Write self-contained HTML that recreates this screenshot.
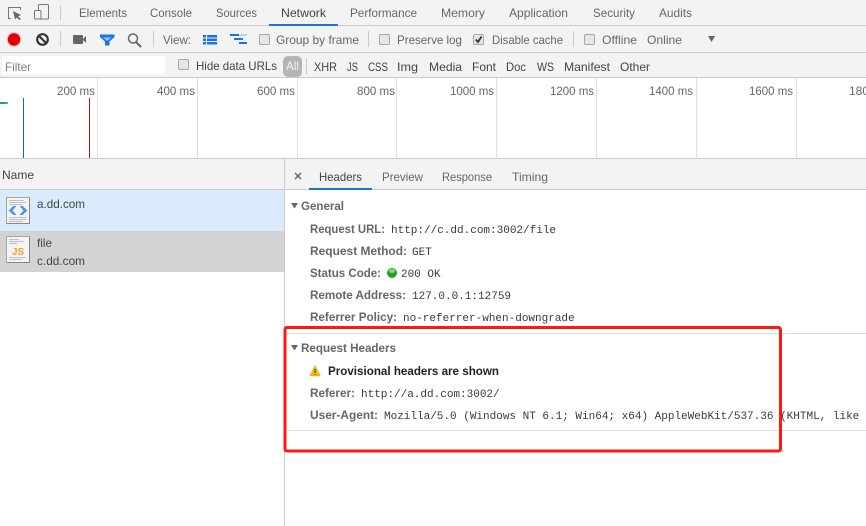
<!DOCTYPE html>
<html>
<head>
<meta charset="utf-8">
<style>
html,body{margin:0;padding:0;background:#fff;width:866px;height:526px;overflow:hidden}
svg{display:block}
text{font-family:"Liberation Sans",sans-serif;font-size:12px;fill:#666}
.d{fill:#444}
.b{font-weight:bold;fill:#666}
.m{font-family:"Liberation Mono",monospace;font-size:11px;fill:#3a3a3a}
</style>
</head>
<body>
<svg width="866" height="526" viewBox="0 0 866 526" xmlns="http://www.w3.org/2000/svg">
<rect width="866" height="526" fill="#fff"/>
<rect width="866" height="77" fill="#f3f3f3"/>
<rect y="25" width="866" height="1" fill="#ccc"/>
<rect y="52" width="866" height="1" fill="#ccc"/>
<rect y="77" width="866" height="1" fill="#ccc"/>

<!-- top tabs -->
<path d="M11 18.500H8.500V7.500H20.500V10" fill="none" stroke="#777" stroke-width="1"/>
<path d="M13 11L21 15L18 16.500L21 19L19.500 20L17 17.500L15 19.500Z" fill="#5f6b76"/>
<rect x="38.500" y="4.500" width="10" height="14.500" fill="none" stroke="#777" rx="1"/>
<rect x="34.500" y="10.500" width="6.500" height="8.500" fill="#f3f3f3" stroke="#777" rx="1"/>
<rect x="60" y="5" width="1" height="15" fill="#ccc"/>
<text x="79" y="17" textLength="48" lengthAdjust="spacingAndGlyphs">Elements</text>
<text x="150" y="17" textLength="42" lengthAdjust="spacingAndGlyphs">Console</text>
<text x="216" y="17" textLength="41" lengthAdjust="spacingAndGlyphs">Sources</text>
<text x="281" y="17" textLength="45" lengthAdjust="spacingAndGlyphs" class="d">Network</text>
<text x="350" y="17" textLength="67" lengthAdjust="spacingAndGlyphs">Performance</text>
<text x="441" y="17" textLength="44" lengthAdjust="spacingAndGlyphs">Memory</text>
<text x="509" y="17" textLength="59" lengthAdjust="spacingAndGlyphs">Application</text>
<text x="593" y="17" textLength="42" lengthAdjust="spacingAndGlyphs">Security</text>
<text x="659" y="17" textLength="33" lengthAdjust="spacingAndGlyphs">Audits</text>
<rect x="269" y="24" width="69" height="2" fill="#1a73e8"/>

<!-- toolbar -->
<circle cx="14" cy="39.500" r="7.500" fill="#e9a0a0" opacity=".5"/>
<circle cx="14" cy="39.500" r="6.200" fill="#e30000"/>
<circle cx="42.500" cy="39.500" r="5.300" fill="none" stroke="#333" stroke-width="2.200"/>
<path d="M38.500 35.500L46.500 43.500" stroke="#333" stroke-width="2.200"/>
<rect x="60" y="31" width="1" height="16" fill="#ccc"/>
<rect x="73" y="35" width="10" height="9" rx="1" fill="#666"/>
<path d="M83 39L86 36V43L83 40Z" fill="#666"/>
<path d="M100 34.500H114.500V37L109.500 41.500V45.500L105 45.500V41.500L100 37Z" fill="#1a73e8"/>
<path d="M103 37.500H111.500L107.200 41Z" fill="#9cc5f5"/>
<circle cx="133" cy="38.500" r="4.500" fill="none" stroke="#666" stroke-width="1.500"/>
<path d="M136 42L141 47" stroke="#666" stroke-width="2"/>
<rect x="153" y="31" width="1" height="16" fill="#ccc"/>
<text x="163" y="44" textLength="28" lengthAdjust="spacingAndGlyphs">View:</text>
<path d="M203 35h3v2.500h-3zM203 38.500h3v2.500h-3zM203 42h3v2.500h-3zM207 35h10v2.500h-10zM207 38.500h10v2.500h-10zM207 42h10v2.500h-10z" fill="#1a73e8"/>
<path d="M230 34h17v2h-17z" fill="#b5d3f5"/>
<path d="M230 34h9v2h-9zM234 38h9v2h-9zM239 42h8v2h-8z" fill="#1a73e8"/>
<rect x="259.500" y="34.500" width="10" height="10" rx="1.500" fill="#e6e6e6" stroke="#a8a8a8"/>
<text x="276" y="44" textLength="83" lengthAdjust="spacingAndGlyphs">Group by frame</text>
<rect x="368" y="31" width="1" height="16" fill="#ccc"/>
<rect x="379.500" y="34.500" width="10" height="10" rx="1.500" fill="#e6e6e6" stroke="#a8a8a8"/>
<text x="397" y="44" textLength="65" lengthAdjust="spacingAndGlyphs">Preserve log</text>
<rect x="473.500" y="34.500" width="10" height="10" rx="1.500" fill="#e6e6e6" stroke="#a8a8a8"/>
<path d="M475.800 39.500L478 42L481.500 36.500" fill="none" stroke="#333" stroke-width="1.800"/>
<text x="492" y="44" textLength="71" lengthAdjust="spacingAndGlyphs">Disable cache</text>
<rect x="573" y="31" width="1" height="16" fill="#ccc"/>
<rect x="584.500" y="34.500" width="10" height="10" rx="1.500" fill="#e6e6e6" stroke="#a8a8a8"/>
<text x="602" y="44" textLength="35" lengthAdjust="spacingAndGlyphs">Offline</text>
<text x="647" y="44" textLength="35" lengthAdjust="spacingAndGlyphs">Online</text>
<path d="M708 36H715L711.500 42Z" fill="#666"/>

<!-- filter bar -->
<rect x="2" y="56" width="163" height="18" fill="#fff"/>
<text x="5" y="71" textLength="26" lengthAdjust="spacingAndGlyphs" style="fill:#808080">Filter</text>
<rect x="178.500" y="59.500" width="10" height="10" rx="1.500" fill="#e6e6e6" stroke="#a8a8a8"/>
<text x="196" y="70" textLength="81" lengthAdjust="spacingAndGlyphs" class="d">Hide data URLs</text>
<rect x="283" y="56" width="19" height="21" rx="5" fill="#b5b5b5"/>
<text x="286" y="70" textLength="13" lengthAdjust="spacingAndGlyphs" style="fill:#f3f3f3">All</text>
<rect x="306" y="58" width="1" height="16" fill="#ccc"/>
<text x="314" y="71" textLength="23" lengthAdjust="spacingAndGlyphs" class="d">XHR</text>
<text x="347" y="71" textLength="11" lengthAdjust="spacingAndGlyphs" class="d">JS</text>
<text x="368" y="71" textLength="20" lengthAdjust="spacingAndGlyphs" class="d">CSS</text>
<text x="397" y="71" textLength="21" lengthAdjust="spacingAndGlyphs" class="d">Img</text>
<text x="429" y="71" textLength="33" lengthAdjust="spacingAndGlyphs" class="d">Media</text>
<text x="472" y="71" textLength="24" lengthAdjust="spacingAndGlyphs" class="d">Font</text>
<text x="506" y="71" textLength="20" lengthAdjust="spacingAndGlyphs" class="d">Doc</text>
<text x="537" y="71" textLength="17" lengthAdjust="spacingAndGlyphs" class="d">WS</text>
<text x="564" y="71" textLength="46" lengthAdjust="spacingAndGlyphs" class="d">Manifest</text>
<text x="620" y="71" textLength="30" lengthAdjust="spacingAndGlyphs" class="d">Other</text>

<!-- timeline -->
<g fill="#e0e0e0">
<rect x="97" y="78" width="1" height="80"/><rect x="197" y="78" width="1" height="80"/>
<rect x="297" y="78" width="1" height="80"/><rect x="396" y="78" width="1" height="80"/>
<rect x="496" y="78" width="1" height="80"/><rect x="596" y="78" width="1" height="80"/>
<rect x="696" y="78" width="1" height="80"/><rect x="796" y="78" width="1" height="80"/>
</g>
<text x="57" y="95" textLength="38" lengthAdjust="spacingAndGlyphs">200 ms</text>
<text x="157" y="95" textLength="38" lengthAdjust="spacingAndGlyphs">400 ms</text>
<text x="257" y="95" textLength="38" lengthAdjust="spacingAndGlyphs">600 ms</text>
<text x="357" y="95" textLength="38" lengthAdjust="spacingAndGlyphs">800 ms</text>
<text x="450" y="95" textLength="44" lengthAdjust="spacingAndGlyphs">1000 ms</text>
<text x="550" y="95" textLength="44" lengthAdjust="spacingAndGlyphs">1200 ms</text>
<text x="649" y="95" textLength="44" lengthAdjust="spacingAndGlyphs">1400 ms</text>
<text x="749" y="95" textLength="44" lengthAdjust="spacingAndGlyphs">1600 ms</text>
<text x="849" y="95">1800 ms</text>
<rect x="0" y="102" width="5" height="2" fill="#1aa56b"/>
<rect x="5" y="102" width="3" height="2" fill="#28b4d8"/>
<rect x="23" y="98" width="1" height="60" fill="#1565c0"/>
<rect x="89" y="98" width="1" height="60" fill="#a11c1c"/>
<rect y="158" width="866" height="1" fill="#ccc"/>

<!-- left list -->
<rect y="159" width="284" height="30" fill="#f3f3f3"/>
<rect y="189" width="284" height="1" fill="#ccc"/>
<rect y="190" width="284" height="41" fill="#d9ebfd"/>
<rect y="231" width="284" height="41" fill="#d3d3d3"/>
<text x="2" y="179" textLength="32" lengthAdjust="spacingAndGlyphs" class="d">Name</text>
<text x="37" y="208" textLength="48" lengthAdjust="spacingAndGlyphs" class="d">a.dd.com</text>
<text x="37" y="247" textLength="15" lengthAdjust="spacingAndGlyphs" class="d">file</text>
<text x="37" y="265" textLength="48" lengthAdjust="spacingAndGlyphs" class="d">c.dd.com</text>

<!-- doc icon -->
<rect x="6.500" y="197.500" width="23" height="26" fill="#f4f4f4" stroke="#a6a6a6"/>
<path d="M7 223.500H29.500V198" fill="none" stroke="#888"/>
<path d="M9 200.500h15M9 202.500h17M9 204.500h13M9 217.500h17M9 219.500h17M9 221.500h14" stroke="#c0c0c0"/>
<path d="M13.500 206L8.500 210.500L13.500 215h3L12.500 210.500L16.500 206zM22.500 206L27.500 210.500L22.500 215h-3L23.500 210.500L19.500 206z" fill="#4d90f0"/>
<rect x="6.500" y="236.500" width="23" height="26" fill="#f4f4f4" stroke="#a6a6a6"/>
<path d="M7 262.500H29.500V237" fill="none" stroke="#888"/>
<path d="M9 239.500h10M9 241.500h15M9 243.500h8M9 257.500h17M9 259.500h13" stroke="#c0c0c0"/>
<text x="12" y="255" textLength="12" lengthAdjust="spacingAndGlyphs" style="font-weight:bold;font-size:10.500px;fill:#f39c27">JS</text>

<!-- vertical divider -->
<rect x="284" y="159" width="1" height="367" fill="#ccc"/>

<!-- detail tabs -->
<rect x="285" y="159" width="581" height="30" fill="#f3f3f3"/>
<rect x="285" y="189" width="581" height="1" fill="#ccc"/>
<path d="M295 173L301 179M301 173L295 179" stroke="#666" stroke-width="1.500"/>
<text x="319" y="181" textLength="43" lengthAdjust="spacingAndGlyphs" class="d">Headers</text>
<text x="382" y="181" textLength="41" lengthAdjust="spacingAndGlyphs">Preview</text>
<text x="442" y="181" textLength="50" lengthAdjust="spacingAndGlyphs">Response</text>
<text x="512" y="181" textLength="36" lengthAdjust="spacingAndGlyphs">Timing</text>
<rect x="309" y="188" width="63" height="2" fill="#1a73e8"/>

<!-- General -->
<path d="M291 203H298L294.500 208.500Z" fill="#666"/>
<text x="301" y="210" textLength="43" lengthAdjust="spacingAndGlyphs" class="b">General</text>
<text x="310" y="233" textLength="75" lengthAdjust="spacingAndGlyphs" class="b">Request URL:</text>
<text x="391" y="233" class="m">http://c.dd.com:3002/file</text>
<text x="310" y="255" textLength="97" lengthAdjust="spacingAndGlyphs" class="b">Request Method:</text>
<text x="412" y="255" class="m">GET</text>
<text x="310" y="277" textLength="71" lengthAdjust="spacingAndGlyphs" class="b">Status Code:</text>
<circle cx="392" cy="273" r="5" fill="#1fa51f"/>
<ellipse cx="392" cy="271" rx="3" ry="2" fill="#7fe07f"/>
<text x="401" y="277" class="m">200 OK</text>
<text x="310" y="299" textLength="96" lengthAdjust="spacingAndGlyphs" class="b">Remote Address:</text>
<text x="412" y="299" class="m">127.0.0.1:12759</text>
<text x="310" y="321" textLength="87" lengthAdjust="spacingAndGlyphs" class="b">Referrer Policy:</text>
<text x="403" y="321" class="m">no-referrer-when-downgrade</text>
<rect x="285" y="333" width="581" height="1" fill="#e0e0e0"/>

<!-- Request Headers -->
<path d="M291 345H298L294.500 350.500Z" fill="#666"/>
<text x="301" y="352" textLength="95" lengthAdjust="spacingAndGlyphs" class="b">Request Headers</text>
<path d="M315 365.500L320.500 376H309.500Z" fill="#f0b91c" stroke="#f0b91c" stroke-linejoin="round" stroke-width=".6"/>
<rect x="314.500" y="369" width="1" height="4" fill="#333"/>
<rect x="314.500" y="374" width="1" height="1" fill="#333"/>
<text x="328" y="375" textLength="171" lengthAdjust="spacingAndGlyphs" style="font-weight:bold;fill:#222">Provisional headers are shown</text>
<text x="310" y="397" textLength="45" lengthAdjust="spacingAndGlyphs" class="b">Referer:</text>
<text x="361" y="397" class="m">http://a.dd.com:3002/</text>
<text x="310" y="419" textLength="68" lengthAdjust="spacingAndGlyphs" class="b">User-Agent:</text>
<text x="384" y="419" class="m">Mozilla/5.0 (Windows NT 6.1; Win64; x64) AppleWebKit/537.36 (KHTML, like Gecko) Chrome/60.0</text>
<rect x="285" y="430" width="581" height="1" fill="#e0e0e0"/>

<!-- annotation -->
<rect x="285" y="327.500" width="495.500" height="123.500" rx="2" fill="none" stroke="#fe1a10" stroke-width="3"/>
</svg>
</body>
</html>
